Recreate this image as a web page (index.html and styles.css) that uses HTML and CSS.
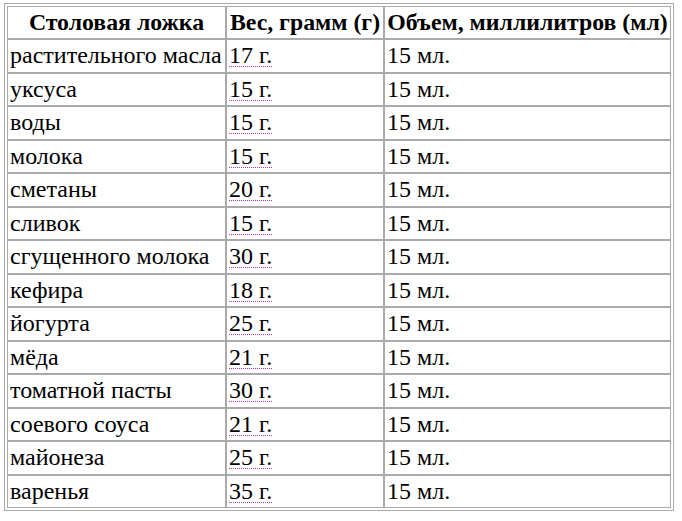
FILE: index.html
```html
<!DOCTYPE html>
<html lang="ru">
<head>
<meta charset="utf-8">
<link rel="stylesheet" href="styles.css">
</head>
<body>
<div class="wrap">
<table class="tbl">
<colgroup><col class="c1"><col class="c2"><col class="c3"></colgroup>
<thead>
<tr><th>Столовая ложка</th><th>Вес, грамм (г)</th><th>Объем, миллилитров (мл)</th></tr>
</thead>
<tbody>
<tr><td>растительного масла</td><td><span class="w">17 г.</span></td><td>15 мл.</td></tr>
<tr><td>уксуса</td><td><span class="w">15 г.</span></td><td>15 мл.</td></tr>
<tr><td>воды</td><td><span class="w">15 г.</span></td><td>15 мл.</td></tr>
<tr><td>молока</td><td><span class="w">15 г.</span></td><td>15 мл.</td></tr>
<tr><td>сметаны</td><td><span class="w">20 г.</span></td><td>15 мл.</td></tr>
<tr><td>сливок</td><td><span class="w">15 г.</span></td><td>15 мл.</td></tr>
<tr><td>сгущенного молока</td><td><span class="w">30 г.</span></td><td>15 мл.</td></tr>
<tr><td>кефира</td><td><span class="w">18 г.</span></td><td>15 мл.</td></tr>
<tr><td>йогурта</td><td><span class="w">25 г.</span></td><td>15 мл.</td></tr>
<tr><td>мёда</td><td><span class="w">21 г.</span></td><td>15 мл.</td></tr>
<tr><td>томатной пасты</td><td><span class="w">30 г.</span></td><td>15 мл.</td></tr>
<tr><td>соевого соуса</td><td><span class="w">21 г.</span></td><td>15 мл.</td></tr>
<tr><td>майонеза</td><td><span class="w">25 г.</span></td><td>15 мл.</td></tr>
<tr><td>варенья</td><td><span class="w">35 г.</span></td><td>15 мл.</td></tr>
</tbody>
</table>
</div>
</body>
</html>
```
FILE: styles.css
```css
html, body {
  margin: 0;
  padding: 0;
  background: #ffffff;
}
.wrap {
  padding: 3px 0 0 4px;
}
.tbl {
  width: 670px;
  table-layout: fixed;
  border-collapse: separate;
  border-spacing: 0;
  border: 1px solid #aaaaaa;
  padding: 2px;
  color: #000;
}
.c1 { width: 219px; }
.c2 { width: 158px; }
.c3 { width: 287px; }
.tbl th, .tbl td {
  font-family: "Liberation Serif", serif;
  font-size: 24px;
  border: 1px solid #aaaaaa;
  padding: 0 2px;
  height: 33.5px;
  box-sizing: border-box;
  line-height: 27px;
  vertical-align: middle;
  white-space: nowrap;
  overflow: hidden;
}
.tbl th {
  font-weight: bold;
  font-size: 23.8px;
  text-align: center;
  height: 33px;
  padding: 0;
}
.tbl td {
  text-align: left;
}
.w {
  text-decoration-line: underline;
  text-decoration-style: dotted;
  text-decoration-color: #bb33bb;
  text-decoration-thickness: 1px;
  text-underline-offset: 3px;
}
```
